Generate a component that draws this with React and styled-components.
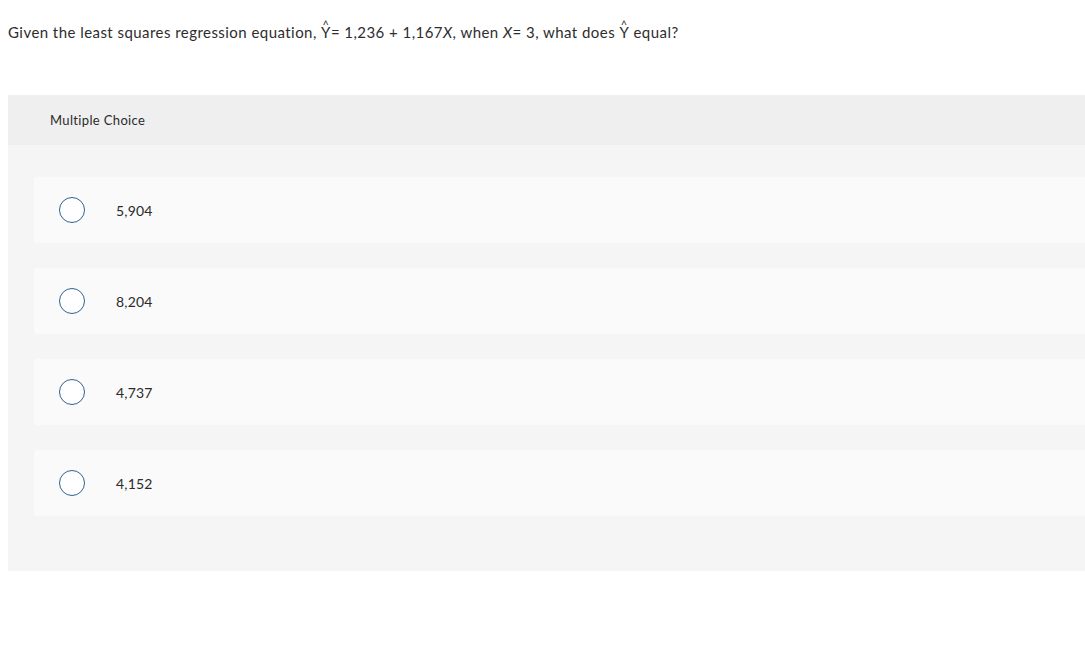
import React from "react";
import styled, { createGlobalStyle } from "styled-components";

const Global = createGlobalStyle`
  html, body { margin: 0; padding: 0; background: #fff; overflow: hidden; }
  body { font-family: Lato, "Open Sans", Arial, sans-serif; color: #2b2b2b; }
`;

const Page = styled.div`
  padding: 22px 0 0 8px;
`;

const Question = styled.p`
  margin: 0;
  font-size: 15px;
  line-height: 20px;
  color: #2d2d2d;
  letter-spacing: 0.45px;
`;

const Var = styled.span`
  font-style: ${(p) => (p.$italic ? "italic" : "normal")};
`;

const Hat = styled.span`
  position: relative;
  display: inline-block;
  &::before {
    content: "^";
    position: absolute;
    left: 50%;
    top: -7px;
    transform: translateX(-50%);
    font-size: 11px;
  }
`;

const Panel = styled.section`
  margin-top: 53px;
  width: calc(100% + 20px);
  background: #f5f5f5;
  padding-bottom: 55px;
`;

const Header = styled.div`
  height: 50px;
  background: #efefef;
  display: flex;
  align-items: center;
  padding-left: 42px;
  font-size: 13px;
  letter-spacing: 0.35px;
  color: #2b2b2b;
`;

const Options = styled.div`
  display: flex;
  flex-direction: column;
  gap: 25px;
  padding: 32px 0 0 26px;
`;

const Option = styled.label`
  height: 66px;
  background: #fafafa;
  border-radius: 3px;
  display: flex;
  align-items: center;
  padding-left: 25px;
  cursor: pointer;
`;

const Radio = styled.span`
  width: 24px;
  height: 24px;
  border: 1.6px solid #2e6294;
  border-radius: 50%;
  background: #fff;
  flex: none;
`;

const OptionText = styled.span`
  margin-left: 31px;
  font-size: 14px;
  letter-spacing: 0.2px;
  color: #2b2b2b;
`;

const choices = ["5,904", "8,204", "4,737", "4,152"];

export default function App() {
  return (
    <>
      <Global />
      <Page>
        <Question>
          Given the least squares regression equation,{" "}
          <Hat>Y</Hat>= 1,236 + 1,167<Var $italic>X</Var>, when{" "}
          <Var $italic>X</Var>= 3, what does <Hat>Y</Hat> equal?
        </Question>
        <Panel>
          <Header>Multiple Choice</Header>
          <Options>
            {choices.map((c) => (
              <Option key={c}>
                <Radio />
                <OptionText>{c}</OptionText>
              </Option>
            ))}
          </Options>
        </Panel>
      </Page>
    </>
  );
}
